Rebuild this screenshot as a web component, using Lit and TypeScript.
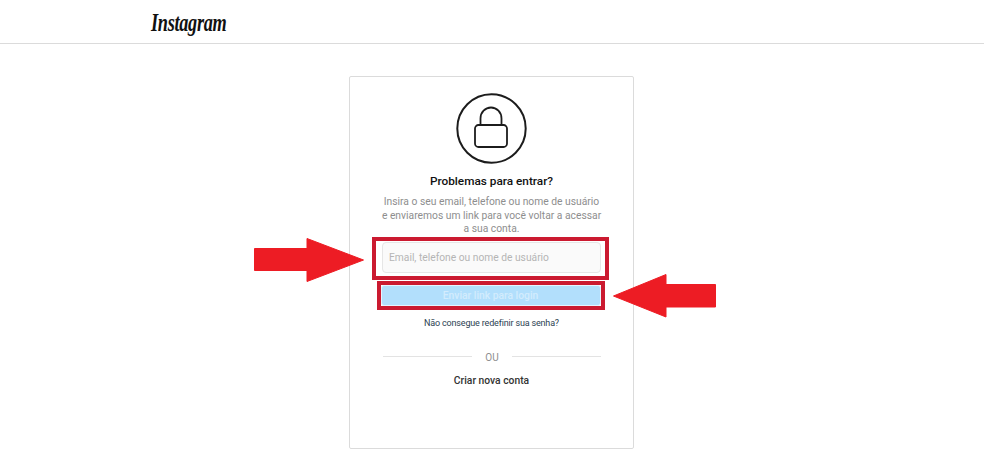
import { LitElement, html, css } from "lit";
import { customElement } from "lit/decorators.js";

@customElement("app-root")
export class AppRoot extends LitElement {
  static styles = css`
    :host {
      display: block;
      position: relative;
      height: 449px;
      overflow: hidden;
      background: #fff;
      font-family: Roboto, "Noto Sans", sans-serif;
      color: #262626;
    }

    header {
      height: 43px;
      border-bottom: 1px solid #dbdbdb;
      padding-left: 151px;
      display: flex;
      align-items: center;
    }

    .logo {
      font-family: "Liberation Serif", serif;
      font-style: italic;
      font-weight: 700;
      font-size: 25px;
      line-height: 1;
      letter-spacing: -0.4px;
      color: #111;
      margin-top: 1px;
      transform: scaleX(0.73);
      transform-origin: left center;
    }

    main {
      display: flex;
      justify-content: center;
      padding: 32px 0 0;
    }

    .card {
      box-sizing: border-box;
      width: 285px;
      height: 373px;
      margin-left: -1px;
      border: 1px solid #dbdbdb;
      border-radius: 2px;
      padding: 16px 32px 0;
      display: flex;
      flex-direction: column;
      align-items: center;
    }

    .lock {
      display: block;
      width: 71px;
      height: 71px;
    }

    h1 {
      margin: 9px 0 0;
      font-size: 11.8px;
      line-height: 16px;
      font-weight: 500;
      color: #111;
    }

    p {
      margin: 6px -6px 0;
      font-size: 10.3px;
      line-height: 13.5px;
      text-align: center;
      color: #8e8e8e;
    }

    .input-mark {
      box-sizing: border-box;
      flex: none;
      width: 237px;
      height: 43px;
      margin: 1.5px 0 0 -2px;
      border: 4px solid #cb1a30;
      padding: 1px 4px 3px 6px;
    }

    .input {
      box-sizing: border-box;
      height: 100%;
      border: 1px solid #e6e6e6;
      border-radius: 4px;
      background: #fafafa;
      padding-left: 6px;
      display: flex;
      align-items: center;
      font-size: 10.25px;
      color: #b5b5b5;
    }

    .button-mark {
      box-sizing: border-box;
      flex: none;
      width: 228px;
      height: 29px;
      margin: 1px 0 0 -2px;
      border: 4px solid #cb1a30;
      padding: 0;
    }

    .button {
      box-sizing: border-box;
      height: 100%;
      border: 1px solid #e6f4fe;
      border-radius: 3px;
      background: #b2dffc;
      display: flex;
      align-items: center;
      justify-content: center;
      font-size: 10.3px;
      font-weight: 500;
      color: #d3ecfd;
    }

    .link {
      margin-top: 7px;
      font-size: 9px;
      letter-spacing: -0.17px;
      line-height: 13px;
      color: #2c4252;
    }

    .divider {
      align-self: stretch;
      display: flex;
      align-items: center;
      gap: 13px;
      margin: 19px 0 0 1px;
      font-size: 10px;
      line-height: 13px;
      color: #8e8e8e;
    }

    .divider span {
      flex: 1;
      height: 1px;
      background: #e3e3e3;
    }

    .divider .or {
      flex: none;
      height: auto;
      background: none;
      padding-top: 2px;
    }

    .create {
      margin-top: 10px;
      font-size: 10.3px;
      line-height: 14px;
      font-weight: 500;
      color: #333;
    }

    .arrow {
      position: absolute;
      display: block;
      fill: #ed1c24;
      stroke: #ed1c24;
      stroke-width: 1;
      stroke-linejoin: round;
    }

    .arrow.left {
      left: 254px;
      top: 237px;
    }

    .arrow.right {
      left: 613px;
      top: 274px;
    }
  `;

  render() {
    return html`
      <header><span class="logo">Instagram</span></header>
      <main>
        <section class="card">
          <svg class="lock" viewBox="0 0 71 71" fill="none" stroke="#1c1c1c">
            <circle cx="35.5" cy="35.5" r="34.2" stroke-width="2" />
            <rect x="19" y="32" width="32" height="22" rx="3.5" stroke-width="1.8" />
            <path d="M24.5 32v-6.5a10.5 11 0 0 1 21 0V32" stroke-width="1.8" />
          </svg>
          <h1>Problemas para entrar?</h1>
          <p>
            Insira o seu email, telefone ou nome de usuário<br />
            e enviaremos um link para você voltar a acessar<br />
            a sua conta.
          </p>
          <div class="input-mark">
            <div class="input">Email, telefone ou nome de usuário</div>
          </div>
          <div class="button-mark">
            <div class="button">Enviar link para login</div>
          </div>
          <div class="link">Não consegue redefinir sua senha?</div>
          <div class="divider"><span></span><span class="or">OU</span><span></span></div>
          <div class="create">Criar nova conta</div>
        </section>
      </main>
      <svg class="arrow left" width="111" height="46" viewBox="0 0 111 46">
        <path d="M.5 11.5H53V1.5L109.5 23 53 44.5V33.5H.5Z" />
      </svg>
      <svg class="arrow right" width="104" height="44" viewBox="0 0 104 44">
        <path d="M102.5 10.5H53V.5L.5 22 53 43V33H102.5Z" />
      </svg>
    `;
  }
}
